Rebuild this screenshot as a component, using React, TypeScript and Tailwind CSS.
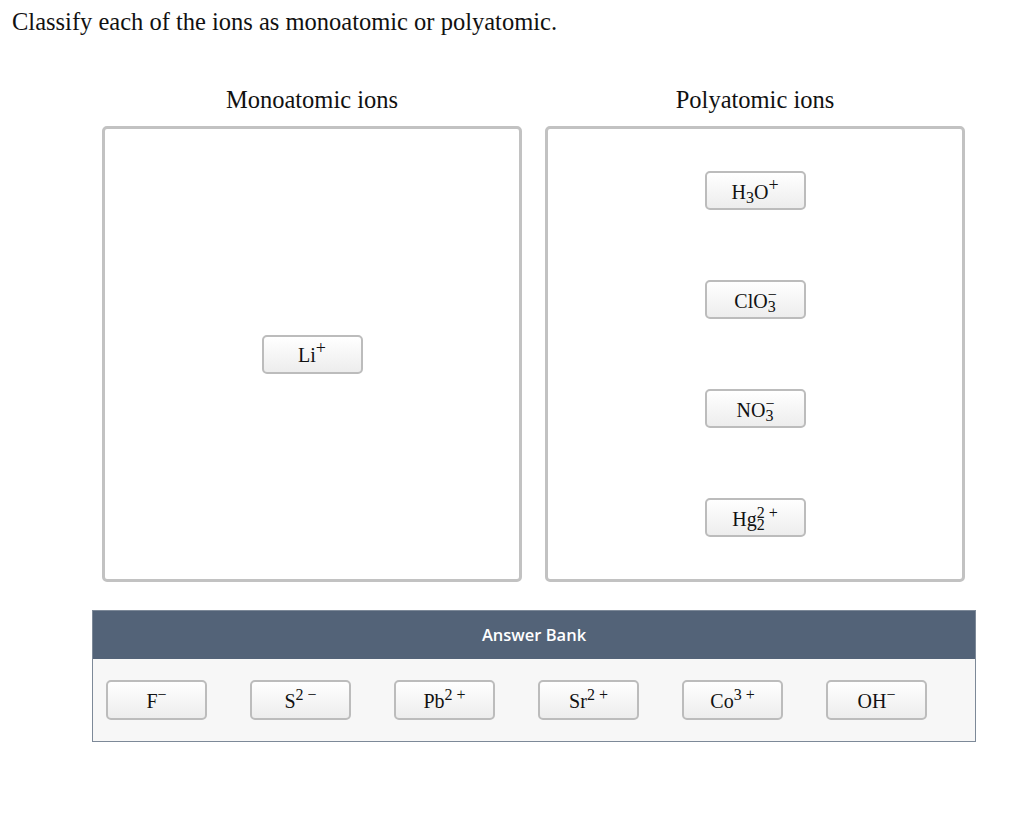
import React from "react";

/* stacked super/subscript, e.g. ClO3- : superscript sits over the subscript */
function Stack({ top, bottom }: { top: string; bottom: string }) {
  return (
    <>
      <span className="inline-block w-0 whitespace-nowrap">
        <sup className="text-[80%]">{top}</sup>
      </span>
      <sub className="text-[80%]">{bottom}</sub>
    </>
  );
}

function Plus() {
  return <sup className="top-[-0.42em] text-[90%]">+</sup>;
}

function Chip({ children, tall }: { children: React.ReactNode; tall?: boolean }) {
  return (
    <div
      className={`flex w-[101px] ${tall ? "h-[40px]" : "h-[39px]"} items-center justify-center rounded-[5px] border-2 border-[#bcbcbc] bg-gradient-to-b from-white to-[#ededed] text-[20px] text-[#111]`}
    >
      <span className="whitespace-nowrap pt-[2px] leading-none">{children}</span>
    </div>
  );
}

const bank: React.ReactNode[] = [
  <>F<sup className="text-[80%]">−</sup></>,
  <>S<sup className="text-[80%]">2 −</sup></>,
  <>Pb<sup className="text-[80%]">2 +</sup></>,
  <>Sr<sup className="text-[80%]">2 +</sup></>,
  <>Co<sup className="text-[80%]">3 +</sup></>,
  <>OH<sup className="text-[80%]">−</sup></>,
];

export default function App() {
  return (
    <div className="h-[831px] w-[1024px] bg-white font-['Liberation_Serif',serif] text-[#111]">
      <h1 className="pl-[12px] pt-[8px] text-[24.5px] leading-[28px]">
        Classify each of the ions as monoatomic or polyatomic.
      </h1>

      {/* Category columns */}
      <div className="ml-[102px] mt-[50px] grid w-[863px] grid-cols-2 gap-x-[23px]">
        <div className="text-center text-[24.5px] leading-[28px]">Monoatomic ions</div>
        <div className="text-center text-[24.5px] leading-[28px]">Polyatomic ions</div>

        <div className="mt-[12px] flex h-[456px] items-center justify-center rounded-[5px] border-[3px] border-[#c2c2c2]">
          <Chip>
            Li<Plus />
          </Chip>
        </div>
        <div className="mt-[12px] flex h-[456px] flex-col items-center justify-center gap-[70px] rounded-[5px] border-[3px] border-[#c2c2c2]">
          <Chip>
            H<sub className="text-[80%]">3</sub>O<Plus />
          </Chip>
          <Chip>
            ClO<Stack top="−" bottom="3" />
          </Chip>
          <Chip>
            NO<Stack top="−" bottom="3" />
          </Chip>
          <Chip>
            Hg<Stack top="2" bottom="2" />
            <sup className="text-[80%]">&nbsp;+</sup>
          </Chip>
        </div>
      </div>

      {/* Answer bank */}
      <div className="ml-[92px] mt-[28px] w-[884px] border border-[#7d8998]">
        <div className="flex h-[48px] items-center justify-center bg-[#536378] font-['Open_Sans',sans-serif] text-[16.5px] font-semibold text-white">
          Answer Bank
        </div>
        <div className="flex gap-[43px] bg-[#f7f7f7] pb-[21px] pl-[13px] pt-[21px]">
          {bank.map((b, i) => (
            <Chip key={i} tall>
              {b}
            </Chip>
          ))}
        </div>
      </div>
    </div>
  );
}
